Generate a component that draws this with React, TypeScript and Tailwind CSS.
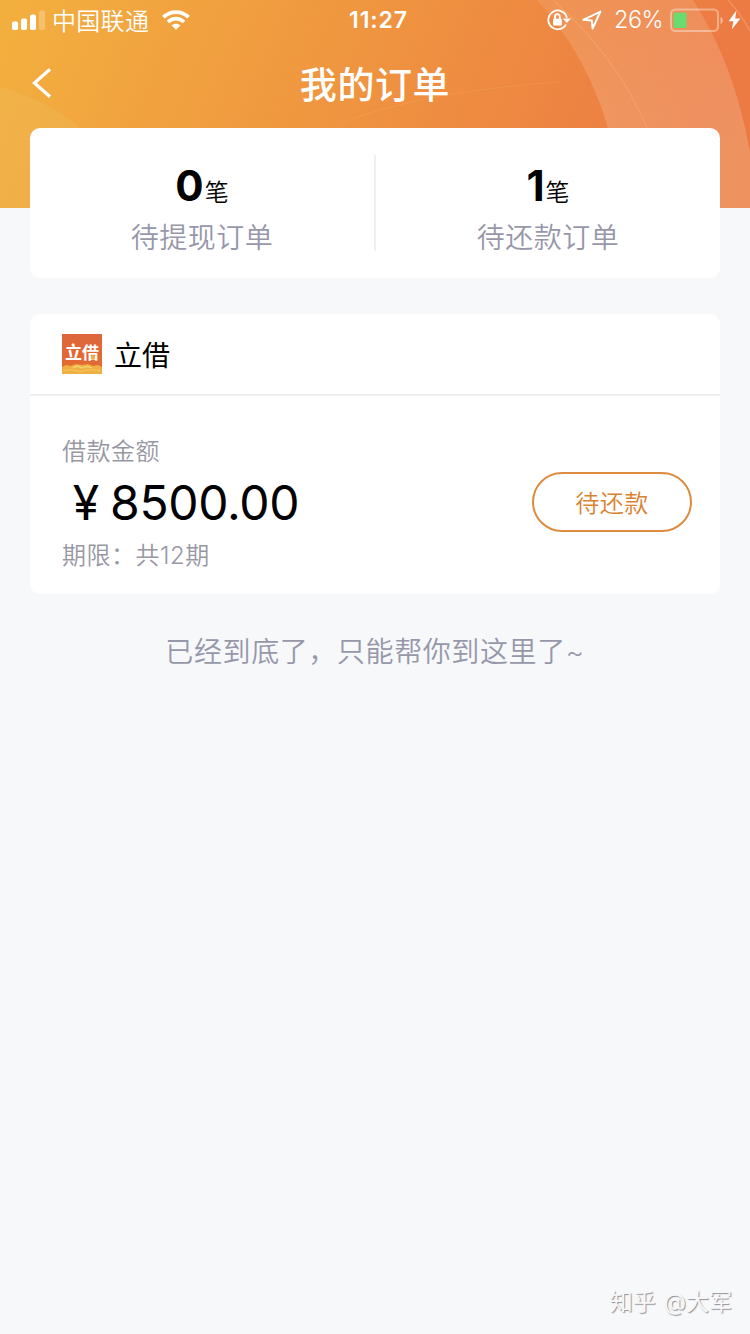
import React from 'react';

const StatusBar: React.FC = () => {
  return (
    <div className="relative flex h-10 items-center justify-between text-white">
      {/* Signal, carrier and wifi */}
      <div className="flex items-center pl-3">
        <svg className="h-5 w-[33px]" viewBox="0 0 33 20" fill="currentColor">
          <rect x="0" y="11.5" width="6" height="8.5" rx="1.8" />
          <rect x="9" y="8.5" width="6" height="11.5" rx="1.8" />
          <rect x="18" y="4.5" width="6" height="15.5" rx="1.8" />
          <rect x="27" y="0.5" width="6" height="19.5" rx="1.8" opacity="0.25" />
        </svg>
        <span className="ml-[7px] pt-[3px] text-[24px] font-[350] leading-[37px] tracking-[0.3px]">中国联通</span>
        <svg className="ml-[13px] h-5 w-7" viewBox="0 0 28 20" fill="none" stroke="currentColor" strokeWidth="3.8">
          <path d="M1.4 7.2C8.6 0.3 19.4 0.3 26.6 7.2" />
          <path d="M6 12C10.6 7.6 17.4 7.6 22 12" />
          <path d="M14 19.8L9.6 15.4C12 13.1 16 13.1 18.4 15.4Z" fill="currentColor" stroke="none" />
        </svg>
      </div>

      <span className="absolute left-1/2 top-0 ml-[3.5px] -translate-x-1/2 text-[23px] font-semibold leading-[41px] tracking-[0.9px]">11:27</span>

      {/* Rotation lock, location and battery */}
      <div className="flex items-center pr-[9px]">
        <svg className="h-6 w-6 overflow-visible" viewBox="0 0 24 24" fill="none" stroke="currentColor" strokeWidth="1.8">
          <path d="M19 16.4A9.4 9.4 0 1 1 19.9 9.8" />
          <path d="M15.8 10.4H24L19.9 15Z" fill="currentColor" stroke="none" />
          <rect x="6" y="10.8" width="8.8" height="6.8" rx="1" fill="currentColor" stroke="none" />
          <path d="M8 11V8.6A2.4 2.4 0 0 1 12.8 8.6V11" />
        </svg>
        <svg className="ml-[11px] h-5 w-5" viewBox="0 0 20 20" fill="none" stroke="currentColor" strokeWidth="2" strokeLinejoin="round">
          <path d="M18.4 1.6L1.4 9.8L9.8 10.5L10.6 18.5Z" />
        </svg>
        <span className="ml-3 w-[50px] text-[23.5px] font-[350] leading-[42px] tracking-[-0.5px]">26%</span>
        <svg className="ml-[6px] h-6 w-[54px]" viewBox="0 0 54 24" fill="none">
          <rect x="1" y="1.5" width="47" height="21.5" rx="4.5" stroke="#fff" strokeOpacity="0.38" strokeWidth="2" />
          <rect x="3.5" y="4.5" width="13" height="15.5" rx="1.5" fill="#6bdb70" />
          <path d="M50.5 9C53.6 9.8 53.6 15.2 50.5 16Z" fill="#fff" fillOpacity="0.45" />
        </svg>
        <svg className="ml-[4px] h-5 w-[13px]" viewBox="0 0 13 20" fill="currentColor">
          <path d="M8.4 0.6L0.6 11.2H5.4L3.8 19.6L12.4 8.4H7.2Z" />
        </svg>
      </div>
    </div>
  );
};

const HeaderBackground: React.FC = () => {
  return (
    <svg className="absolute inset-0 h-full w-full" viewBox="0 0 750 208" preserveAspectRatio="none">
      <defs>
        <linearGradient id="header" gradientUnits="userSpaceOnUse" x1="0" y1="0" x2="640" y2="270">
          <stop offset="0" stopColor="#f3b03e" />
          <stop offset="0.5" stopColor="#ef9540" />
          <stop offset="1" stopColor="#ec7a43" />
        </linearGradient>
        <linearGradient id="band" x1="0" y1="0" x2="0.4" y2="1">
          <stop offset="0" stopColor="#fff" stopOpacity="0.09" />
          <stop offset="1" stopColor="#f5d5b0" stopOpacity="0.27" />
        </linearGradient>
      </defs>
      <rect width="750" height="208" fill="url(#header)" />
      <path d="M0 87Q46 99 80 128Q130 165 150 208H0Z" fill="#f0c468" fillOpacity="0.25" />
      <path d="M537 0Q587 55 608 128Q620 165 622 208H750V153Q735 65 693 0Z" fill="url(#band)" />
      <path d="M553 0Q618 58 647 128" fill="none" stroke="#ffc890" strokeOpacity="0.22" strokeWidth="1.2" />
      <path d="M728 0Q741 14 750 31" fill="none" stroke="#ffc7a0" strokeOpacity="0.35" strokeWidth="1.2" />
      <path d="M340 124Q415 92 560 82" fill="none" stroke="#ffc080" strokeOpacity="0.15" strokeWidth="1.2" />
    </svg>
  );
};

const LoanLogo: React.FC = () => {
  return (
    <div className="relative flex h-10 w-10 items-center justify-center overflow-hidden bg-gradient-to-b from-[#dd673c] to-[#e66a30]">
      <svg className="absolute inset-0 h-10 w-10" viewBox="0 0 40 40">
        <path d="M0 40V33L4 31L9 32L14 30L20 31L26 30L31 32L36 31L40 33V40Z" fill="#eeb045" />
        <path d="M11 34Q15 30.5 20 34Q25 31 30 34" fill="none" stroke="#f8d473" strokeWidth="1.4" />
        <path d="M2 37Q10 34 18 38Q28 34 38 37" fill="none" stroke="#f3c052" strokeWidth="1.4" />
        <path d="M9 11.5L11 8.5L13 11.5Z" fill="#ffd25a" />
      </svg>
      <span className="relative -mt-[2px] text-[17px] font-bold leading-none text-white">立借</span>
      <span className="absolute left-[29px] top-[21px] h-[5px] w-1 rounded-full bg-[#f0ac48]" />
    </div>
  );
};

const App: React.FC = () => {
  const stats = [
    { count: 0, label: '待提现订单' },
    { count: 1, label: '待还款订单' },
  ];

  return (
    <div className="flex h-[1334px] w-[750px] flex-col overflow-hidden bg-[#f6f8fa] font-[Inter,'Noto_Sans_CJK_SC',sans-serif]">
      {/* Header */}
      <header className="relative h-[208px] shrink-0">
        <HeaderBackground />
        <StatusBar />
        <div className="relative flex h-[88px] items-center justify-center text-white">
          <button className="absolute left-8 top-7" aria-label="返回">
            <svg className="h-[30px] w-5" viewBox="0 0 20 30" fill="none" stroke="currentColor" strokeWidth="3.2">
              <path d="M18 1.2L2.4 15L18 28.8" />
            </svg>
          </button>
          <h1 className="pt-[3px] text-[37px] font-medium leading-[85px] tracking-[0.6px]">我的订单</h1>
        </div>
      </header>

      <main className="relative -mt-20 flex flex-1 flex-col px-[30px]">
        {/* Order counts */}
        <section className="flex h-[150px] items-center rounded-[10px] bg-white">
          {stats.map((item, index) => (
            <div
              key={item.label}
              className={`flex h-24 flex-1 flex-col items-center ${index === 0 ? 'border-r-2 border-[#f0f0f2]' : ''}`}
            >
              <div className="mt-[7px] flex h-12 items-baseline text-black">
                <span className="text-[42px] font-bold leading-[48px]">{item.count}</span>
                <span className="ml-px text-[24px] font-[350] leading-[48px]">笔</span>
              </div>
              <span className="mt-2 text-[28px] font-[350] leading-10 tracking-[0.5px] text-[#9797aa]">{item.label}</span>
            </div>
          ))}
        </section>

        {/* Loan order */}
        <section className="mt-9 h-[280px] rounded-[10px] bg-white">
          <div className="flex h-[82px] items-center border-b-2 border-[#efeff1] pl-8">
            <LoanLogo />
            <span className="ml-3 pt-[3px] text-[28px] leading-10 text-black">立借</span>
          </div>
          <div className="flex items-center justify-between pl-8 pr-7 pt-9">
            <div className="flex flex-col">
              <span className="pt-1 text-[24px] font-[350] leading-8 tracking-[0.5px] text-[#9797a3]">借款金额</span>
              <span className="flex h-[68px] items-center pt-px text-[48px] leading-[67px] text-black">
                <span className="w-12 text-center">¥</span>
                <span className="tracking-[-0.3px]">8500.00</span>
              </span>
              <span className="pt-1 text-[24px] font-[350] leading-8 tracking-[0.5px] text-[#9797a3]">期限：共12期</span>
            </div>
            <button className="h-[60px] w-40 rounded-full border-2 border-[#dd8b40] pt-[3px] text-[24px] font-[350] tracking-[0.5px] text-[#d98230]">
              待还款
            </button>
          </div>
        </section>

        <p className="mt-[38px] text-center text-[28px] font-[350] leading-10 tracking-[0.6px] text-[#9797aa]">
          已经到底了，只能帮你到这里了~
        </p>

        {/* Watermark */}
        <div className="mb-4 mt-auto flex justify-end gap-2 text-[23px] leading-8 text-[#f8f8fa] [text-shadow:1px_1px_1px_#8f9196]">
          <span>知乎</span>
          <span className="-mr-3">@大军</span>
        </div>
      </main>
    </div>
  );
};

export default App;
